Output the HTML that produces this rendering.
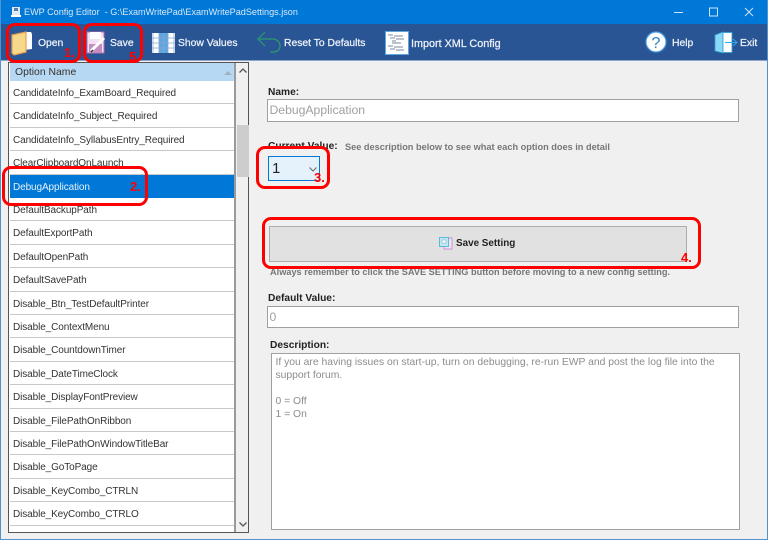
<!DOCTYPE html>
<html><head><meta charset="utf-8"><style>
html,body{margin:0;padding:0;width:768px;height:540px;overflow:hidden;background:#f0f0f0}
body{font-family:"Liberation Sans",sans-serif;position:relative;filter:blur(.3px)}
div{position:absolute;box-sizing:border-box;white-space:nowrap}
svg{position:absolute;overflow:visible}
.tb{color:#eef2f8;font-size:10.35px;font-weight:normal;-webkit-text-stroke:.25px #eef2f8;top:37px;line-height:14px}
.r{left:10px;width:224px;height:23.4px;border-bottom:1px solid #c8c8c8;background:#fff;color:#333;font-size:10px;line-height:26px;padding-left:3px;letter-spacing:-.1px}
.lb{font-size:10.2px;font-weight:bold;color:#222;line-height:14px}
.inp{background:#fff;border:1px solid #a0a0a0;color:#a0a0a0}
.red{border:3.5px solid #f00;border-radius:9px}
.num{color:#f00;font-weight:bold;font-size:13px;line-height:14px}
.note{font-size:9.2px;font-weight:bold;color:#777;line-height:12px}
</style></head><body>
<div style="left:0;top:0;width:768px;height:24px;background:#0078d7"></div>
<div style="left:0;top:24px;width:768px;height:37px;background:#2a5595;border-bottom:1px solid #8fa6c8"></div>
<div style="left:0;top:0;width:768px;height:540px;border:1px solid #4d94d0;border-top:0"></div>

<svg style="left:10px;top:6px" width="13" height="12" viewBox="0 0 13 12"><rect x="2" y="1" width="8" height="9" fill="#dfe9f5"/><rect x="4" y="2" width="4" height="3" fill="#5a7ca8"/><rect x="1" y="9" width="10" height="2" fill="#fff"/></svg>
<div style="left:24px;top:5px;color:#d8e8f8;font-size:9.1px;line-height:14px;">EWP Config Editor &nbsp;- G:\ExamWritePad\ExamWritePadSettings.json</div>
<svg style="left:674px;top:7px" width="80" height="11" viewBox="0 0 80 11" fill="none" stroke="#cfe4f7" stroke-width="1"><path d="M0 5.5H9"/><rect x="35.5" y="1" width="8" height="8"/><path d="M71 1l8 8M79 1l-8 8"/></svg>

<svg style="left:11px;top:30px" width="22" height="25" viewBox="0 0 22 25"><path d="M13 2h7l1 2v15l-8 1z" fill="#fff"/><path d="M1 5l14-3v20L3 25 1 23z" fill="#f7d98c" stroke="#e8a050" stroke-width="1.2"/></svg>
<div class="tb" style="left:38px">Open</div>
<svg style="left:86px;top:31px" width="22" height="23" viewBox="0 0 22 23"><rect x="1" y="1" width="17" height="21" fill="#f3dff0" stroke="#b56bb0"/><rect x="4" y="1" width="11" height="7" fill="#fff"/><rect x="3" y="13" width="13" height="9" fill="#c58cc0"/><path d="M5 20L18 7" stroke="#fff" stroke-width="3"/><path d="M5 21l2-2" stroke="#333" stroke-width="1.5"/></svg>
<div class="tb" style="left:110px">Save</div>
<svg style="left:152px;top:33px" width="23" height="20" viewBox="0 0 23 20"><rect width="23" height="20" fill="#fff"/><rect x="7" y="0" width="9" height="20" fill="#5da6e0"/><path d="M7 0v20M11.5 0v20M16 0v20M1 0v20M22 0v20M0 5h23M0 10h23M0 15h23" stroke="#88a8cf" stroke-width=".8"/></svg>
<div class="tb" style="left:178px">Show Values</div>
<svg style="left:257px;top:31px" width="24" height="23" viewBox="0 0 24 23" fill="none" stroke="#2c9a6c" stroke-width="1.2"><path d="M1 8h14c5 0 8 3 8 7s-3 6-7 6h-3"/><path d="M8 1L1 8l7 7"/></svg>
<div class="tb" style="left:284px">Reset To Defaults</div>
<svg style="left:385px;top:31px" width="24" height="24" viewBox="0 0 24 24"><rect x=".5" y=".5" width="23" height="23" fill="#fff" stroke="#5da6e0"/><path d="M3 4h5M9 5h9M5 7h5M11 8h8M7 10h4M7 12h9M3 15h5M9 16h9M5 18h5M11 19h8" stroke="#7a8aa0" stroke-width="1"/></svg>
<div class="tb" style="left:411px;font-size:10.8px">Import XML Config</div>
<svg style="left:645px;top:31px" width="22" height="22" viewBox="0 0 22 22"><circle cx="11" cy="11" r="10" fill="#fff" stroke="#4a9fe0" stroke-width="1.2"/><text x="11" y="17" font-family="Liberation Sans" font-size="16" text-anchor="middle" fill="#2a80c8">?</text></svg>
<div class="tb" style="left:672px">Help</div>
<svg style="left:714px;top:32px" width="24" height="21" viewBox="0 0 24 21"><path d="M1 3l8-3v21l-8-2z" fill="#8ad8f8" stroke="#2a9fd8" stroke-width=".8"/><rect x="9" y="0.500" width="9" height="20" fill="#fff" stroke="#2a9fd8" stroke-width=".8"/><path d="M11 10.500h12M19 7l4 3.500-4 3.500" fill="none" stroke="#2ea8ea" stroke-width="1"/></svg>
<div class="tb" style="left:740px">Exit</div>

<div style="left:8px;top:62px;width:241px;height:471px;border:1px solid #555;border-width:1px 1px 1.500px 1.500px;background:#fff"></div>
<div style="left:10px;top:63px;width:224px;height:18px;background:#b7d8f2;color:#333;font-size:10.4px;line-height:19px;padding-left:5px">Option Name</div>
<svg style="left:224px;top:70px" width="8" height="5"><path d="M0 5L4 1l4 4z" fill="#9db3c4"/></svg>
<div style="left:234px;top:63px;width:2px;height:469px;background:#9a9a9a"></div>
<div style="left:236px;top:63px;width:12px;height:469px;background:#f0f0f0"></div>
<svg style="left:239px;top:68px" width="8" height="5" fill="none" stroke="#555" stroke-width="1.300"><path d="M0.500 4.500L4 1l3.500 3.500"/></svg>
<svg style="left:239px;top:522px" width="8" height="5" fill="none" stroke="#555" stroke-width="1.300"><path d="M0.500 .5L4 4l3.500-3.500"/></svg>
<div style="left:237px;top:125px;width:12px;height:52px;background:#cdcdcd"></div>

<div class="r" style="top:81px">CandidateInfo_ExamBoard_Required</div>
<div class="r" style="top:104.400px">CandidateInfo_Subject_Required</div>
<div class="r" style="top:127.800px">CandidateInfo_SyllabusEntry_Required</div>
<div class="r" style="top:151.200px">ClearClipboardOnLaunch</div>
<div class="r" style="top:174.600px;background:#0078d7;color:#e4f0fa;border-bottom:0">DebugApplication</div>
<div class="r" style="top:198px">DefaultBackupPath</div>
<div class="r" style="top:221.400px">DefaultExportPath</div>
<div class="r" style="top:244.800px">DefaultOpenPath</div>
<div class="r" style="top:268.200px">DefaultSavePath</div>
<div class="r" style="top:291.600px">Disable_Btn_TestDefaultPrinter</div>
<div class="r" style="top:315px">Disable_ContextMenu</div>
<div class="r" style="top:338.400px">Disable_CountdownTimer</div>
<div class="r" style="top:361.800px">Disable_DateTimeClock</div>
<div class="r" style="top:385.200px">Disable_DisplayFontPreview</div>
<div class="r" style="top:408.600px">Disable_FilePathOnRibbon</div>
<div class="r" style="top:432px">Disable_FilePathOnWindowTitleBar</div>
<div class="r" style="top:455.400px">Disable_GoToPage</div>
<div class="r" style="top:478.800px">Disable_KeyCombo_CTRLN</div>
<div class="r" style="top:502.200px">Disable_KeyCombo_CTRLO</div>
<div class="r" style="top:525.600px;height:6px;border:0"></div>

<div class="lb" style="left:268px;top:86px">Name:</div>
<div class="inp" style="left:267px;top:99px;width:472px;height:23px;font-size:12.2px;line-height:21px;padding-left:1.500px">DebugApplication</div>
<div class="lb" style="left:268px;top:140px">Current Value:</div>
<div class="note" style="left:345px;top:141px">See description below to see what each option does in detail</div>
<div style="left:268px;top:156px;width:52px;height:25px;background:#e5f1fb;border:1px solid #0078d7;color:#222;font-size:15px;line-height:24px;padding-left:3px">1</div>
<svg style="left:309px;top:167px" width="8" height="5" fill="none" stroke="#666"><path d="M.5 .5L4 4l3.500-3.500"/></svg>

<div style="left:269px;top:226px;width:418px;height:36px;background:#e1e1e1;border:1px solid #adadad"></div>
<svg style="left:439px;top:237px" width="14" height="13" viewBox="0 0 14 13"><rect x="5" y="1" width="8" height="11" fill="#f3e4f3" stroke="#c080c8" stroke-width=".8"/><rect x="0.500" y="0.500" width="9" height="9" fill="#bfe8f0" stroke="#40b0d0" stroke-width=".8"/><rect x="3" y="3" width="4" height="3" fill="#fff" stroke="#70a0c0" stroke-width=".5"/></svg>
<div style="left:456px;top:237px;font-size:9.9px;font-weight:bold;color:#222;line-height:14px">Save Setting</div>
<div class="note" style="left:270px;top:266px">Always remember to click the SAVE SETTING button before moving to a new config setting.</div>

<div class="lb" style="left:268px;top:292px">Default Value:</div>
<div class="inp" style="left:267px;top:306px;width:472px;height:22px;font-size:12.2px;line-height:20px;padding-left:1.500px">0</div>

<div class="lb" style="left:270px;top:339px">Description:</div>
<div class="inp" style="left:270.500px;top:352.500px;width:469px;height:177px;font-size:10.350px;line-height:13px;padding:2px 4px;color:#8c8c8c;white-space:pre-line">If you are having issues on start-up, turn on debugging, re-run EWP and post the log file into the
support forum.

0 = Off
1 = On</div>

<div class="red" style="left:6px;top:23px;width:75px;height:40px"></div>
<div class="red" style="left:83px;top:23px;width:60px;height:40px"></div>
<div class="red" style="left:2px;top:166px;width:146px;height:40px"></div>
<div class="red" style="left:256px;top:146px;width:74px;height:43px"></div>
<div class="red" style="left:262px;top:217px;width:439px;height:52px"></div>
<div class="num" style="left:64px;top:46px">1.</div>
<div class="num" style="left:129px;top:50px">5.</div>
<div class="num" style="left:130px;top:180px">2.</div>
<div class="num" style="left:314px;top:171px">3.</div>
<div class="num" style="left:681px;top:251px">4.</div>
</body></html>
